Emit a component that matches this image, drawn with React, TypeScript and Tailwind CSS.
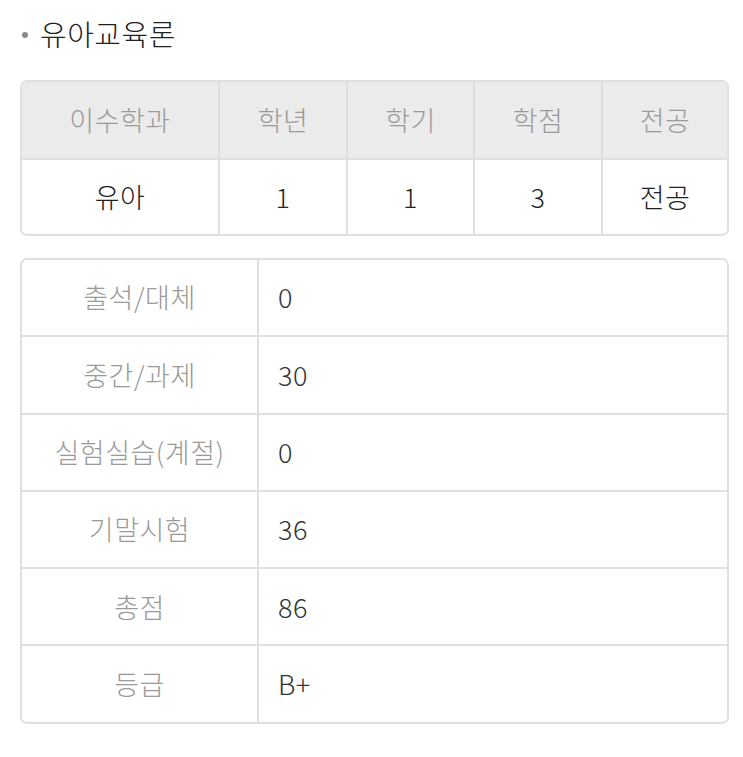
const font = { fontFamily: '"Noto Sans CJK KR", "Noto Sans", sans-serif' }

const heads = ['이수학과', '학년', '학기', '학점', '전공']
const vals = ['유아', '1', '1', '3', '전공']

const scores = [
  { label: '출석/대체', value: '0' },
  { label: '중간/과제', value: '30' },
  { label: '실험실습(계절)', value: '0' },
  { label: '기말시험', value: '36' },
  { label: '총점', value: '86' },
  { label: '등급', value: 'B+' },
]

export default function App() {
  return (
    <div className="min-h-[757px] bg-white pt-[12px]" style={font}>
      <div className="flex items-center pl-[22px] h-[42px]">
        <span className="w-[6px] h-[6px] rounded-full bg-[#8a8a8a] mr-[12px] mt-[3px]" />
        <h2 className="text-[29px] leading-none text-[#222] font-light tracking-[0.5px]">유아교육론</h2>
      </div>

      {/* 이수 정보 */}
      <div className="ml-[20px] w-[709px] mt-[26px] border-2 border-[#e0e0e0] rounded-[7px] overflow-hidden">
        <div className="grid grid-cols-[196px_128px_127px_128px_1fr] bg-[#ebebeb]">
          {heads.map((h, i) => (
            <div
              key={h}
              className={`h-[76px] flex items-center justify-center text-[27px] font-light text-[#9a9a9a] tracking-[0.5px] ${i > 0 ? 'border-l-2 border-[#dcdcdc]' : ''}`}
            >
              {h}
            </div>
          ))}
        </div>
        <div className="grid grid-cols-[196px_128px_127px_128px_1fr] border-t-2 border-[#e0e0e0]">
          {vals.map((v, i) => (
            <div
              key={i}
              className={`h-[74px] flex items-center justify-center text-[27px] font-light text-[#222] tracking-[0.5px] ${i > 0 ? 'border-l-2 border-[#e0e0e0]' : ''}`}
            >
              {v}
            </div>
          ))}
        </div>
      </div>

      {/* 성적 */}
      <div className="ml-[20px] w-[709px] mt-[22px] border-2 border-[#e0e0e0] rounded-[7px] overflow-hidden">
        {scores.map((s, i) => (
          <div
            key={s.label}
            className={`grid grid-cols-[235px_1fr] ${i > 0 ? 'border-t-2 border-[#e0e0e0]' : ''}`}
          >
            <div className="h-[75.3px] flex items-center justify-center text-[27px] font-light text-[#9a9a9a] tracking-[0.5px]">
              {s.label}
            </div>
            <div className="h-[75.3px] flex items-center pl-[19px] border-l-2 border-[#e0e0e0] text-[27px] font-light text-[#333] tracking-[0.5px]">
              {s.value}
            </div>
          </div>
        ))}
      </div>
    </div>
  )
}
